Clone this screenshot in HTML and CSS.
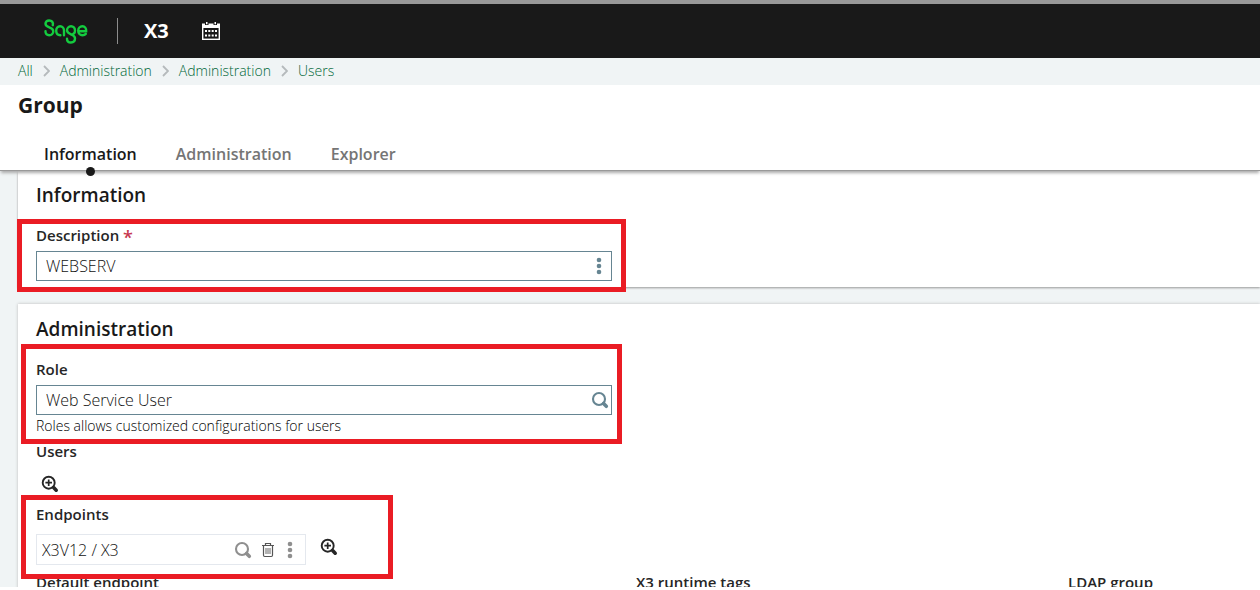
FILE: index.html
```
<!doctype html>
<html lang="en">
<head>
	<meta charset="UTF-8">
	<title>Group</title>
	<link rel="stylesheet" href="styles.css">
</head>
<body>
	<svg class="defs" aria-hidden="true">
		<symbol id="iconSearch" viewBox="0 0 18 18">
			<circle cx="8" cy="8" r="6" fill="none" stroke="currentColor" stroke-width="2.1"/>
			<path d="M12.5 12.5L15.3 15.3" stroke="currentColor" stroke-width="3.6" stroke-linecap="round"/>
		</symbol>
		<symbol id="iconSearchAdd" viewBox="0 0 18 18">
			<circle cx="7.7" cy="7.7" r="6" fill="none" stroke="currentColor" stroke-width="1.9"/>
			<path d="M4.4 7.7H11M7.7 4.4V11" stroke="currentColor" stroke-width="1.7"/>
			<path d="M12.6 12.6L15.2 15.2" stroke="currentColor" stroke-width="3.6" stroke-linecap="round"/>
		</symbol>
		<symbol id="iconDots" viewBox="0 0 6 18">
			<circle cx="3" cy="3" r="2.3" fill="currentColor"/>
			<circle cx="3" cy="9" r="2.3" fill="currentColor"/>
			<circle cx="3" cy="15" r="2.3" fill="currentColor"/>
		</symbol>
		<symbol id="iconTrash" viewBox="0 0 14 16">
			<path d="M1 3.5H13M4.5 3V1.5H9.5V3M2.5 4V13.3Q2.5 14.5 3.7 14.5H10.3Q11.5 14.5 11.5 13.3V4" fill="none" stroke="currentColor" stroke-width="1.2"/>
			<path d="M5 6V12M7 6V12M9 6V12" fill="none" stroke="currentColor" stroke-width="0.9"/>
		</symbol>
	</svg>

	<div class="page">
		<header class="topbar">
			<a class="logo" href="#" aria-label="Sage">
				<svg width="44" height="25" viewBox="0 0 44 25" fill="none" stroke="#14cc3f" stroke-width="2.4" stroke-linecap="round">
					<path d="M8.8 6.2C9.5 3 7.6 1.5 5.2 1.5C2.8 1.5 1.5 3 1.5 4.8C1.5 9.2 9.3 7.4 9.3 12.2C9.3 14.5 7.5 16.2 5.2 16.2C2.8 16.2 1.3 14.6 1.5 12.2"/>
					<path d="M20 16.2V11.6C20 9 18.4 7.3 16.1 7.3C13.7 7.3 12.2 9.2 12.2 11.7C12.2 14.3 13.8 16.2 16.4 16.2"/>
					<path d="M31 11.4C31 9 29.3 7.3 27 7.3C24.7 7.3 23 9.1 23 11.3C23 16.2 31 14.4 31 19.3C31 21.8 29.3 23.5 27 23.5C24.7 23.5 23 22 23 19.7M27 15.5C29.5 15.3 31 14 31 11.4"/>
					<path d="M34.5 12.2H42.2C42.4 9.2 40.9 7.3 38.4 7.3C36 7.3 34.2 9.2 34.2 11.8C34.2 14.4 36 16.2 38.5 16.2C39.9 16.2 41 15.8 41.8 14.9"/>
				</svg>
			</a>
			<span class="product">X3</span>
			<button class="icon_btn calendar" type="button" aria-label="Calendar">
				<svg width="18" height="18" viewBox="0 0 18 18">
					<path d="M0 1.5H3V3H6.5V1.5H11.5V3H15V1.5H18V18H0Z" fill="#fff"/>
					<path d="M4 0H5.5V2.2H4ZM12.5 0H14V2.2H12.5Z" fill="#fff"/>
					<path d="M1.4 6H16.6V16.6H1.4Z" fill="#191919"/>
					<path d="M3 8H5V10H3ZM6.3 8H8.3V10H6.3ZM9.7 8H11.7V10H9.7ZM13 8H15V10H13ZM3 12.5H5V14.5H3ZM6.3 12.5H8.3V14.5H6.3ZM9.7 12.5H11.7V14.5H9.7ZM13 12.5H15V14.5H13Z" fill="#fff"/>
				</svg>
			</button>
		</header>

		<nav class="crumbs" aria-label="Breadcrumb">
			<a href="#">All</a>
			<svg width="7" height="12" viewBox="0 0 7 12"><path d="M1 1L6 6L1 11"/></svg>
			<a href="#">Administration</a>
			<svg width="7" height="12" viewBox="0 0 7 12"><path d="M1 1L6 6L1 11"/></svg>
			<a href="#">Administration</a>
			<svg width="7" height="12" viewBox="0 0 7 12"><path d="M1 1L6 6L1 11"/></svg>
			<a href="#">Users</a>
		</nav>

		<div class="heading">
			<h1>Group</h1>
			<nav class="tabs">
				<a class="active" href="#info">Information</a>
				<a href="#admin">Administration</a>
				<a href="#explorer">Explorer</a>
			</nav>
		</div>

		<main class="content">
			<section class="card first" id="info">
				<h2>Information</h2>
				<div class="field">
					<label for="description">Description <span class="required">*</span></label>
					<div class="box">
						<input id="description" type="text" value="WEBSERV">
						<button class="icon_btn" type="button" aria-label="Description options">
							<svg width="6" height="18"><use href="#iconDots"/></svg>
						</button>
					</div>
					<span class="mark mark_description"></span>
				</div>
			</section>

			<section class="card" id="admin">
				<h2>Administration</h2>
				<div class="field">
					<label for="role">Role</label>
					<div class="box role">
						<input id="role" type="text" value="Web Service User">
						<button class="icon_btn" type="button" aria-label="Select role">
							<svg width="18" height="18"><use href="#iconSearch"/></svg>
						</button>
					</div>
					<p class="help">Roles allows customized configurations for users</p>
					<span class="mark mark_role"></span>
				</div>

				<div class="group">
					<h3>Users</h3>
					<button class="icon_btn add" type="button" aria-label="Add users">
						<svg width="18" height="18"><use href="#iconSearchAdd"/></svg>
					</button>
				</div>

				<div class="endpoints">
					<label for="endpoint">Endpoints</label>
					<div class="endpoint_row">
						<div class="box light">
							<input id="endpoint" type="text" value="X3V12 / X3">
							<button class="icon_btn" type="button" aria-label="Select endpoint">
								<svg width="18" height="18"><use href="#iconSearch"/></svg>
							</button>
							<button class="icon_btn trash" type="button" aria-label="Delete endpoint">
								<svg width="14" height="16"><use href="#iconTrash"/></svg>
							</button>
							<button class="icon_btn" type="button" aria-label="Endpoint options">
								<svg width="6" height="18"><use href="#iconDots"/></svg>
							</button>
						</div>
						<button class="icon_btn add_endpoint" type="button" aria-label="Add endpoints">
							<svg width="18" height="18"><use href="#iconSearchAdd"/></svg>
						</button>
					</div>
					<span class="mark mark_endpoints"></span>
				</div>

				<div class="columns">
					<h3>Default endpoint</h3>
					<h3>X3 runtime tags</h3>
					<h3>LDAP group</h3>
				</div>
			</section>
		</main>
	</div>
</body>
</html>
```
FILE: styles.css
```
*{
	margin: 0;
	padding: 0;
	box-sizing: border-box;
}
body{
	height: 100vh;
	padding-bottom: 3px;
	background: #fff;
	color: #262626;
	font-family: "Open Sans", "Noto Sans", sans-serif;
	font-size: 14px;
}
a{
	text-decoration: none;
}
svg{
	display: block;
}
.defs{
	position: absolute;
	width: 0;
	height: 0;
}
.page{
	display: flex;
	flex-direction: column;
	height: 100%;
	overflow: hidden;
}
.icon_btn{
	flex: none;
	border: 0;
	background: none;
	color: inherit;
	cursor: pointer;
}

/* top bar */
.topbar{
	flex: none;
	display: flex;
	align-items: center;
	height: 58px;
	padding-left: 44px;
	border-top: 4px solid #999;
	background: #191919;
	color: #fff;
}
.logo{
	padding-right: 29px;
}
.product{
	padding-left: 26px;
	border-left: 1px solid #8c8c8c;
	font-size: 20px;
	font-weight: 700;
	line-height: 26px;
}
.calendar{
	margin-left: 33px;
}
.crumbs{
	flex: none;
	display: flex;
	align-items: center;
	gap: 10px;
	height: 27px;
	padding: 0 18px 2px;
	background: #f0f4f5;
}
.crumbs a{
	color: #006738;
	font-weight: 300;
}
.crumbs path{
	fill: none;
	stroke: #b5babc;
	stroke-width: 1.8;
}

/* title and tabs */
.heading{
	flex: none;
	position: relative;
	z-index: 1;
	background: #fff;
	border-bottom: 1px solid #999;
	box-shadow: 0 3px 3px -1px #aaa;
}
h1{
	padding: 6px 18px 0;
	color: #191919;
	font-size: 21px;
	font-weight: 700;
	line-height: 28px;
}
.tabs{
	display: flex;
	gap: 39px;
	padding: 18px 44px 0;
}
.tabs a{
	position: relative;
	height: 33px;
	color: #757575;
	font-size: 16px;
	font-weight: 600;
	line-height: 34px;
}
.tabs .active{
	color: #191919;
}
.tabs .active:after{
	content: "";
	position: absolute;
	left: 50%;
	bottom: -6px;
	width: 9px;
	height: 9px;
	margin-left: -4px;
	border-radius: 50%;
	background: #191919;
}

/* sections */
.content{
	flex: 1;
	min-height: 0;
	padding-left: 18px;
	background: #f0f4f5;
}
.card{
	margin-bottom: 17px;
	padding: 11px 0 6px 18px;
	background: #fff;
	box-shadow: 0 0 3px #bbb;
}
.first{
	padding-top: 10px;
	box-shadow: 0 1px 2px #999;
}
h2{
	margin-bottom: 16px;
	color: #191919;
	font-size: 19px;
	font-weight: 600;
	line-height: 28px;
}
h3,
label{
	display: block;
	font-size: 15px;
	font-weight: 600;
	line-height: 20px;
}
.required{
	color: #c7384f;
	font-size: 18px;
	line-height: 16px;
	vertical-align: bottom;
}
.field{
	position: relative;
	width: calc(100% * 24 / 51);
}
.box{
	display: flex;
	align-items: center;
	height: 30px;
	margin-top: 6px;
	padding: 0 9px;
	border: 1px solid #668592;
	color: #668592;
}
.box input{
	flex: 1;
	min-width: 0;
	border: 0;
	outline: 0;
	background: none;
	color: #111;
	font-family: inherit;
	font-size: 16px;
	font-weight: 300;
}
.role{
	padding-right: 2px;
}
.help{
	margin-top: 1px;
	font-weight: 300;
	color: #000;
	line-height: 20px;
}
.group{
	margin-top: 5px;
}
.add{
	display: block;
	margin: 14px 0 11px 5px;
}
.endpoints{
	position: relative;
	width: 345px;
}
.endpoint_row{
	display: flex;
	gap: 14px;
	margin-top: 10px;
}
.light{
	width: 270px;
	height: 31px;
	margin-top: 0;
	padding: 0 12px 0 5px;
	border-color: #e4e8ee;
	color: #8f8f8f;
}
.trash{
	margin: 0 12px 0 9px;
	color: #555;
}
.add_endpoint{
	height: 26px;
}
.columns{
	display: grid;
	grid-template-columns: 25fr 18fr 8fr;
	margin-top: 7px;
}

/* red frames round the highlighted fields */
.mark{
	position: absolute;
	border: 5px solid #ea1c24;
	pointer-events: none;
}
.mark_description{
	top: -6px;
	right: -14px;
	bottom: -11px;
	left: -19px;
}
.mark_role{
	top: -15px;
	right: -10px;
	bottom: -8px;
	left: -15px;
}
.mark_endpoints{
	top: -9px;
	right: -12px;
	bottom: -14px;
	left: -15px;
}
```
